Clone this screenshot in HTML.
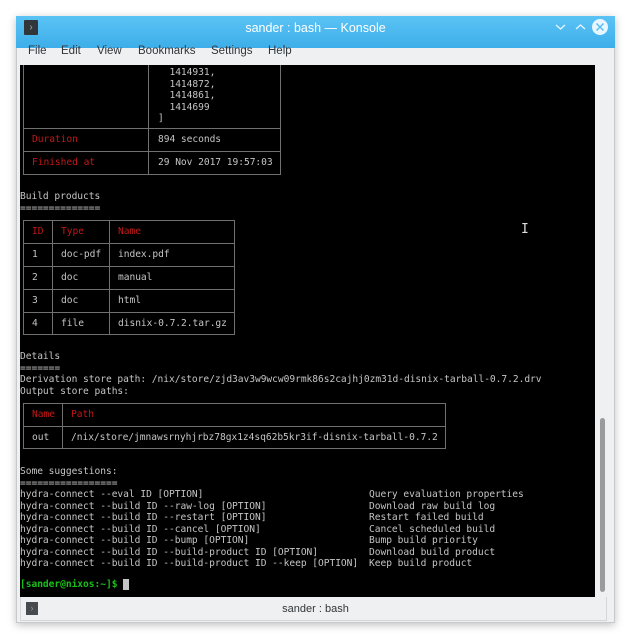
<!DOCTYPE html>
<html><head><meta charset="utf-8"><style>
*{margin:0;padding:0;box-sizing:border-box}
body{width:631px;height:640px;background:#fff;position:relative;overflow:hidden;font-family:"Liberation Sans","DejaVu Sans",sans-serif}
.win{position:absolute;left:16px;top:16px;width:599px;height:607px;background:#eff0f1;border:1px solid #c8c9ca;box-shadow:0 2px 8px rgba(0,0,0,.25)}
.title{position:absolute;left:16px;top:16px;width:599px;height:32px;background:linear-gradient(#5bc3f5,#3daee9);color:#fff;font-size:12.5px;text-align:center;line-height:25px}
.menu{position:absolute;top:45px;font-size:11.5px;color:#31363b}
.term{position:absolute;left:20px;top:65px;width:575px;height:532px;background:#000;overflow:hidden}
.t{position:absolute;font-family:"DejaVu Sans Mono","Liberation Mono",monospace;font-size:9.6px;line-height:12px;color:#c4c4c4;white-space:pre;letter-spacing:-0.045px}
.r{color:#c01818}
.g{color:#18c018;font-weight:bold}
.h{position:absolute;height:1px;background:#707070}
.v{position:absolute;width:1px;background:#707070}
</style></head><body>
<div class="win"></div>
<div class="title">sander : bash — Konsole</div>
<div style="position:absolute;left:24px;top:20px;width:14px;height:15px;background:#31363b;border-radius:1px;color:#aaa;font-size:10px;line-height:15px;text-align:center">›</div>
<svg style="position:absolute;left:550px;top:18px" width="60" height="20">
<path d="M6 7 L10.5 11 L15 7" stroke="#e8f6ff" stroke-width="1.3" fill="none"/>
<path d="M26 11 L30.5 7 L35 11" stroke="#e8f6ff" stroke-width="1.3" fill="none"/>
<circle cx="50" cy="9" r="8" fill="#e8f6ff"/>
<path d="M46.5 5.5 L53.5 12.5 M53.5 5.5 L46.5 12.5" stroke="#5bbfee" stroke-width="1.5"/>
</svg>
<div class="menu" style="left:28px">File</div>
<div class="menu" style="left:61px">Edit</div>
<div class="menu" style="left:97px">View</div>
<div class="menu" style="left:138px">Bookmarks</div>
<div class="menu" style="left:211px">Settings</div>
<div class="menu" style="left:268px">Help</div>
<div class="term"></div>
<div style="position:absolute;left:600px;top:418px;width:5px;height:174px;background:#9a9b9c;border-radius:3px"></div>
<div style="position:absolute;left:20px;top:597px;width:587px;height:24px;border:1px solid #d5d6d7;border-top:none"></div>
<div style="position:absolute;left:26px;top:602px;width:12px;height:13px;background:#474b4f;color:#999;font-size:9px;line-height:13px;text-align:center">›</div>
<div style="position:absolute;left:0;width:631px;top:603px;text-align:center;font-size:11px;color:#31363b">sander : bash</div>

<div class="v" style="left:23px;top:65px;height:110px"></div>
<div class="v" style="left:148px;top:65px;height:110px"></div>
<div class="v" style="left:280px;top:65px;height:110px"></div>
<div class="h" style="left:23px;top:128px;width:258px"></div>
<div class="h" style="left:23px;top:151px;width:258px"></div>
<div class="h" style="left:23px;top:174px;width:258px"></div>
<div class="t" style="left:158px;top:67px;line-height:11.5px">  1414931,
  1414872,
  1414861,
  1414699
]</div>
<div class="t r" style="left:32px;top:134px">Duration</div>
<div class="t" style="left:158px;top:134px">894 seconds</div>
<div class="t r" style="left:32px;top:157px">Finished at</div>
<div class="t" style="left:158px;top:157px">29 Nov 2017 19:57:03</div>

<div class="t" style="left:20px;top:191px">Build products
==============</div>
<div class="h" style="left:23px;top:220px;width:212px"></div>
<div class="h" style="left:23px;top:243px;width:212px"></div>
<div class="h" style="left:23px;top:266px;width:212px"></div>
<div class="h" style="left:23px;top:289px;width:212px"></div>
<div class="h" style="left:23px;top:312px;width:212px"></div>
<div class="h" style="left:23px;top:334px;width:212px"></div>
<div class="v" style="left:23px;top:220px;height:115px"></div>
<div class="v" style="left:52px;top:220px;height:115px"></div>
<div class="v" style="left:109px;top:220px;height:115px"></div>
<div class="v" style="left:234px;top:220px;height:115px"></div>
<div class="t r" style="left:32px;top:226px">ID</div><div class="t r" style="left:61px;top:226px">Type</div><div class="t r" style="left:118px;top:226px">Name</div>
<div class="t" style="left:32px;top:249px">1</div><div class="t" style="left:61px;top:249px">doc-pdf</div><div class="t" style="left:118px;top:249px">index.pdf</div>
<div class="t" style="left:32px;top:272px">2</div><div class="t" style="left:61px;top:272px">doc</div><div class="t" style="left:118px;top:272px">manual</div>
<div class="t" style="left:32px;top:295px">3</div><div class="t" style="left:61px;top:295px">doc</div><div class="t" style="left:118px;top:295px">html</div>
<div class="t" style="left:32px;top:318px">4</div><div class="t" style="left:61px;top:318px">file</div><div class="t" style="left:118px;top:318px">disnix-0.7.2.tar.gz</div>

<div class="t" style="left:20px;top:351px;line-height:11.5px">Details
=======
Derivation store path: /nix/store/zjd3av3w9wcw09rmk86s2cajhj0zm31d-disnix-tarball-0.7.2.drv
Output store paths:</div>
<div class="h" style="left:23px;top:403px;width:423px"></div>
<div class="h" style="left:23px;top:426px;width:423px"></div>
<div class="h" style="left:23px;top:448px;width:423px"></div>
<div class="v" style="left:23px;top:403px;height:46px"></div>
<div class="v" style="left:62px;top:403px;height:46px"></div>
<div class="v" style="left:445px;top:403px;height:46px"></div>
<div class="t r" style="left:32px;top:409px">Name</div><div class="t r" style="left:71px;top:409px">Path</div>
<div class="t" style="left:32px;top:432px">out</div><div class="t" style="left:71px;top:432px">/nix/store/jmnawsrnyhjrbz78gx1z4sq62b5kr3if-disnix-tarball-0.7.2</div>

<div class="t" style="left:20px;top:466px;line-height:11.5px">Some suggestions:
=================
hydra-connect --eval ID [OPTION]
hydra-connect --build ID --raw-log [OPTION]
hydra-connect --build ID --restart [OPTION]
hydra-connect --build ID --cancel [OPTION]
hydra-connect --build ID --bump [OPTION]
hydra-connect --build ID --build-product ID [OPTION]
hydra-connect --build ID --build-product ID --keep [OPTION]</div>
<div class="t" style="left:369px;top:489px;line-height:11.5px">Query evaluation properties
Download raw build log
Restart failed build
Cancel scheduled build
Bump build priority
Download build product
Keep build product</div>
<div class="t g" style="left:20px;top:579px">[sander@nixos:~]$</div>
<div style="position:absolute;left:123px;top:579px;width:6px;height:11px;background:#c4c4c4"></div>
<div class="t" style="left:521px;top:224px;color:#ddd;font-size:13px">I</div>
</body></html>
